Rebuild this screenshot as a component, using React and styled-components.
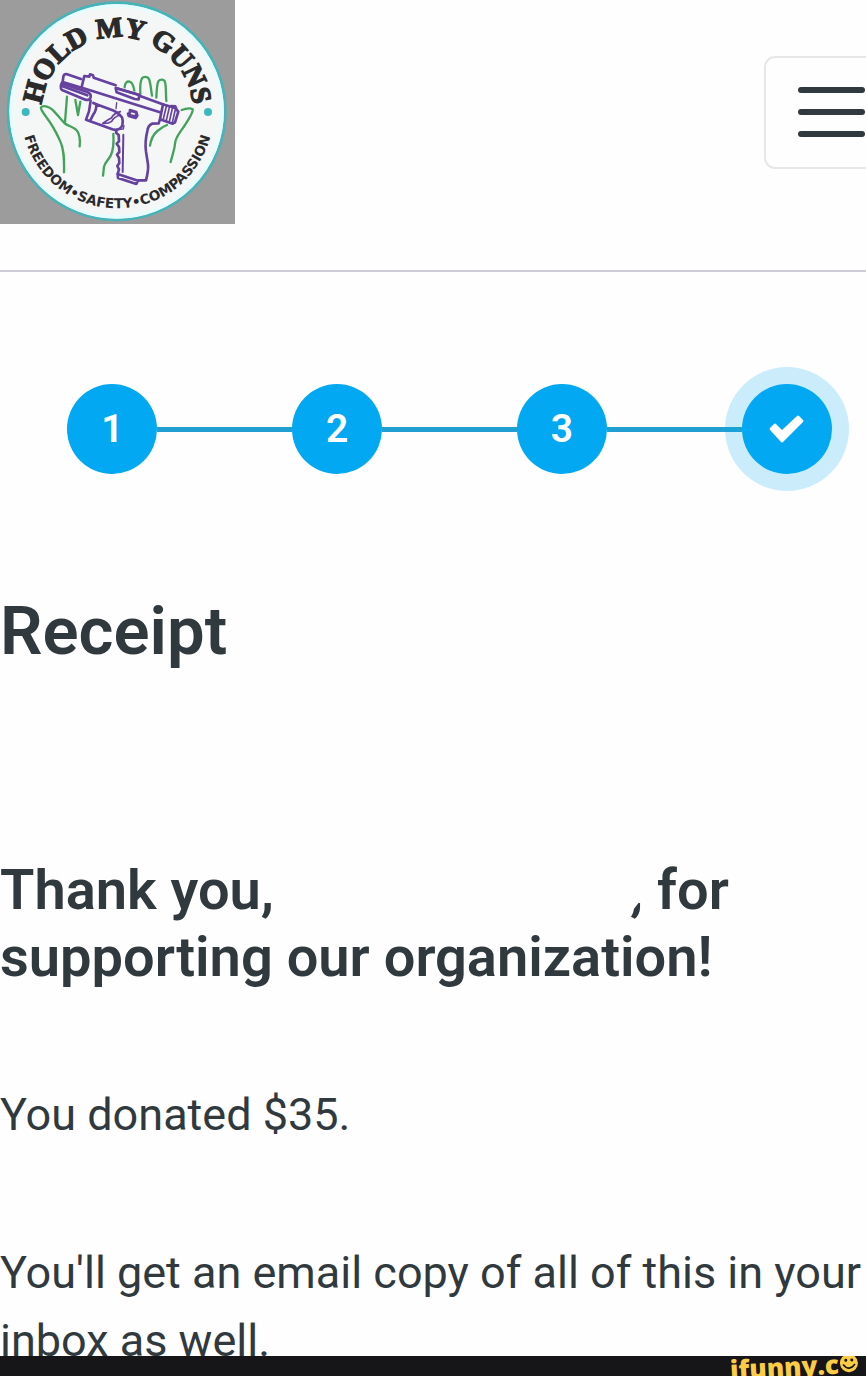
import React from "react";
import styled, { createGlobalStyle, css } from "styled-components";

const steps = [
  { id: 1, done: true },
  { id: 2, done: true },
  { id: 3, done: true },
  { id: 4, current: true },
];

function Logo() {
  return (
    <LogoImage viewBox="0 0 705 672" role="img" aria-label="Hold My Guns">
      <defs>
        <path id="arc-top" d="M124 339 A228 228 0 0 1 580 339" />
        <path id="arc-bottom" d="M64 337 A288 288 0 0 0 640 337" />
      </defs>
      <rect width="705" height="672" fill="#9c9c9c" />
      <circle cx="350" cy="334" r="326" fill="#f5f6f6" stroke="#45b3b8" strokeWidth="8" />
      <circle cx="350" cy="334" r="317" fill="none" stroke="#e6fdfd" strokeWidth="9" />
      <circle cx="77" cy="336" r="12" fill="#3db9bd" />
      <circle cx="624" cy="336" r="12" fill="#3db9bd" />
      <LogoTitle>
        <textPath href="#arc-top" startOffset="50%">HOLD MY GUNS</textPath>
      </LogoTitle>
      <LogoMotto>
        <textPath href="#arc-bottom" startOffset="50%">FREEDOM•SAFETY•COMPASSION</textPath>
      </LogoMotto>
      <g fill="none" stroke="#43a35c" strokeWidth="7" strokeLinecap="round" strokeLinejoin="round">
        <path d="M192 517 C193 475 192 445 179 420 C168 395 155 372 138 350 C130 338 121 330 123 322 C128 315 146 319 156 328 C167 338 180 355 193 369 C205 379 222 380 231 392 C240 405 241 420 239 439" />
        <path d="M201 290 L195 366" />
        <path d="M226 300 L234 345 L241 305" />
        <path d="M340 402 C342 430 339 452 332 467 C325 480 314 488 312 500 L309 527" />
        <path d="M374 262 C374 248 382 243 389 245 C397 247 400 255 403 272" />
        <path d="M421 282 C420 262 420 244 426 235 C431 229 443 229 447 237 C452 250 453 270 456 287" />
        <path d="M469 293 C470 270 471 250 475 244 C481 237 492 237 495 246 C499 262 497 284 499 303" />
        <path d="M450 437 C453 417 458 405 472 393 C483 384 490 379 501 375" />
        <path d="M545 330 C556 326 568 322 578 328 C580 338 570 350 558 370 C545 392 530 405 526 425 C524 450 517 465 512 486" />
      </g>
      <g fill="none" stroke="#6541a0" strokeWidth="8" strokeLinecap="round" strokeLinejoin="round">
        <path d="M245 261 L253 228 L268 230 L270 223 L279 226 L281 233 L347 256" />
        <path d="M243 237 L199 222 Q191 222 190 230 L188 246 L245 263" />
        <path d="M188 246 Q181 252 183 266 L186 270 L256 299 Q270 302 272 291 Q274 281 262 276 L191 253" />
        <path d="M188 259 L262 286" />
        <path d="M246 263 L480 337" />
        <path d="M347 264 L418 285 L416 298 L404 297 L350 277 Z" fill="#f5f6f6" />
        <path d="M350 265 L416 284 M420 288 L488 313 L528 325" />
        <path d="M489 313 L480 358 L518 371 L525 367 L535 335 L529 328 L526 319 L514 318" />
        <path d="M499 319 L490 357 M508 322 L499 361 M517 325 L508 365 M526 328 L517 368" strokeWidth="5" />
        <path d="M272 302 L267 334 L258 359 L337 388 Q357 394 367 377 Q370 362 366 352 Q350 335 338 331 L289 313 Q290 330 280 343 L272 359" />
        <path d="M280 309 L289 313" />
        <path d="M361 335 Q341 340 335 353 Q322 360 308 370 Q326 371 335 364 Q340 352 361 344" strokeWidth="5" />
        <path d="M350 308 L348 326" strokeWidth="4" />
        <path d="M390 330 L409 336 L412 347 L407 354 L386 348 L384 341 L389 340 Z" fill="#6541a0" />
        <path d="M395 340 L403 342" stroke="#f5f6f6" strokeWidth="5" />
        <path d="M480 358 L476 370 L456 371 Q444 376 442 393 Q434 425 438 455 L444 493 Q446 510 438 541 L416 541" />
        <path d="M350 390 L348 398 L356 405 L357 424 L350 431 L357 441 L358 456 L351 464 L357 474 L358 489 L352 498 L357 508 L353 522" />
        <path d="M353 522 L414 542 L409 552 L354 534 Z" />
        <path d="M370 404 L368 516" strokeWidth="6" />
        <path d="M372 377 L370 387 L361 388" strokeWidth="4" />
      </g>
    </LogoImage>
  );
}

function Watermark() {
  return (
    <BottomBar>
      <WatermarkText>
        ifunny.c
        <Smiley viewBox="0 0 20 20" aria-hidden="true">
          <circle cx="10" cy="10" r="9" fill="#fccc45" />
          <circle cx="7" cy="7" r="1.5" fill="#161619" />
          <circle cx="13" cy="7" r="1.5" fill="#161619" />
          <path d="M4 11 Q10 19 16 11" fill="none" stroke="#161619" strokeWidth="1.6" />
        </Smiley>
      </WatermarkText>
    </BottomBar>
  );
}

function App() {
  return (
    <>
      <GlobalStyle />
      <Page>
        <Header>
          <Logo />
          <MenuButton type="button" aria-label="Menu">
            <MenuLine />
            <MenuLine />
            <MenuLine />
          </MenuButton>
        </Header>
        <Steps>
          {steps.map((s) => {
            return (
              <Step key={s.id}>
                <StepCircle $current={s.current}>
                  {s.current ? (
                    <Check viewBox="0 0 35 28" role="img" aria-label="Done">
                      <path d="M1 13 L5 9 Q6 8 7 9 L13 15 L28 1 Q29 0 30 1 L34 5 Q35 6 34 7 L14 27 Q13 28 12 27 L1 15 Q0 14 1 13 Z" />
                    </Check>
                  ) : (
                    s.id
                  )}
                </StepCircle>
              </Step>
            );
          })}
        </Steps>
        <Content>
          <Title>Receipt</Title>
          <Thanks>
            Thank you,
            <DonorName />
            <Comma>,</Comma> for supporting our organization!
          </Thanks>
          <Text>You donated $35.</Text>
          <Text>You'll get an email copy of all of this in your inbox as well.</Text>
        </Content>
      </Page>
      <Watermark />
    </>
  );
}

const GlobalStyle = createGlobalStyle`
  body {
    margin: 0;
    background: #fefefe;
    color: #30393d;
    font-family: Roboto, "Liberation Sans", sans-serif;
    overflow: hidden;
  }
`;

/* the page runs a little wider than the window */
const Page = styled.div`
  margin-right: -33px;
`;

const Header = styled.header`
  display: flex;
  align-items: center;
  justify-content: space-between;
  padding-bottom: 46px;
  border-bottom: 2px solid #cccdd8;
`;

const LogoImage = styled.svg`
  display: block;
  width: 235px;
  height: 224px;
`;

const LogoTitle = styled.text`
  font-family: "Liberation Serif", serif;
  font-size: 85px;
  font-weight: bold;
  text-anchor: middle;
  fill: #2a2a2c;
  stroke: #2a2a2c;
  stroke-width: 4px;
`;

const LogoMotto = styled.text`
  font-family: "DejaVu Sans", sans-serif;
  font-size: 41px;
  font-weight: bold;
  text-anchor: middle;
  fill: #2a2a2c;
`;

const MenuButton = styled.button`
  display: flex;
  flex-direction: column;
  justify-content: center;
  gap: 16px;
  height: 113px;
  padding: 0 32px;
  background: transparent;
  border: 2px solid #e6e7e8;
  border-radius: 11px;
`;

const MenuLine = styled.span`
  width: 67px;
  height: 6px;
  border-radius: 3px;
  background: #30393d;
`;

const Steps = styled.ol`
  display: flex;
  list-style: none;
  margin: 0;
  padding: 112px 0 117px;
`;

const Step = styled.li`
  flex: 1;
  display: flex;
  align-items: center;
  &::before,
  &::after {
    content: "";
    flex: 1;
    height: 5px;
    background: #219fd0;
  }
  &:first-child::before,
  &:last-child::after {
    background: transparent;
  }
`;

const StepCircle = styled.span`
  display: flex;
  align-items: center;
  justify-content: center;
  width: 90px;
  height: 90px;
  border-radius: 50%;
  background: #02a8f1;
  color: #fff;
  font-size: 39px;
  font-weight: 600;
  ${(props) =>
    props.$current &&
    css`
      box-shadow: 0 0 0 17px rgba(2, 168, 241, 0.2);
    `}
`;

const Check = styled.svg`
  width: 35px;
  height: 28px;
  fill: #fff;
`;

const Content = styled.main`
  display: flex;
  flex-direction: column;
`;

const Title = styled.h1`
  margin: 0 0 186px;
  font-size: 67px;
  line-height: 80px;
  font-weight: 600;
`;

const Thanks = styled.h2`
  margin: 0 0 90px;
  font-size: 56px;
  line-height: 67px;
  font-weight: 600;
`;

const DonorName = styled.span`
  display: inline-block;
  width: 356px;
`;

/* the upper left of the comma is hidden together with the name */
const Comma = styled.span`
  display: inline-block;
  clip-path: polygon(0 57px, 10px 44px, 100% 44px, 100% 100%, 0 100%);
`;

const Text = styled.p`
  margin: 0 0 90px;
  font-size: 45px;
  line-height: 68px;
  &:last-child {
    margin-bottom: 0;
  }
`;

const BottomBar = styled.footer`
  position: fixed;
  left: 0;
  right: 0;
  bottom: 0;
  display: flex;
  justify-content: flex-end;
  height: 20px;
  padding-right: 7px;
  background: #161619;
  overflow: hidden;
`;

const WatermarkText = styled.span`
  display: flex;
  align-items: center;
  height: 20px;
  color: #fccc45;
  font-family: "Open Sans", sans-serif;
  font-size: 26px;
  font-weight: 800;
  transform: rotate(-3deg);
`;

const Smiley = styled.svg`
  width: 20px;
  height: 20px;
`;

export default App;
